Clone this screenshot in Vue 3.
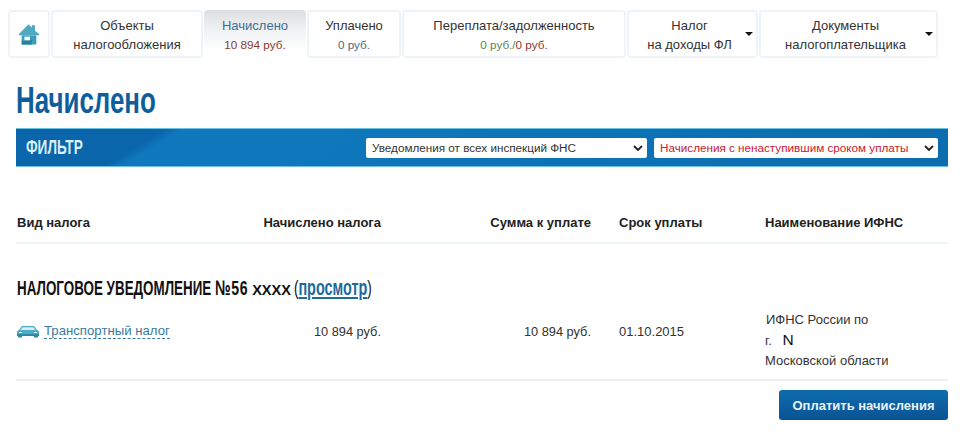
<script setup>
const tabs = [
  { key: 'objects', w: 152, lines: ['Объекты', 'налогообложения'] },
  { key: 'accrued', w: 102, lines: ['Начислено'], active: true },
  { key: 'paid', w: 94, lines: ['Уплачено'] },
  { key: 'over', w: 224, lines: ['Переплата/задолженность'] },
  { key: 'ndfl', w: 131, lines: ['Налог', 'на доходы ФЛ'], menu: true },
  { key: 'docs', w: 179, lines: ['Документы', 'налогоплательщика'], menu: true },
]
</script>

<template>
  <div class="page">
    <nav class="tabs">
      <a class="tab home">
        <svg width="22" height="23" viewBox="0 0 24 24">
          <path d="M1 12.500 11.500 2 15 5.500V3h3.500v6L23 12.500v1.500H1z" fill="#4fa9c2" />
          <path d="M4 14h16v10H4z" fill="#3b9db8" />
          <path d="M7 15.500h6v4H7z" fill="#fff" />
          <path d="M4 20h9v-1h2v5H4z" fill="#2a7f9b" />
        </svg>
      </a>
      <a v-for="t in tabs" :key="t.key" class="tab" :class="{ active: t.active, menu: t.menu }" :style="{ width: t.w + 'px' }">
        <span v-for="l in t.lines" :key="l" class="line">{{ l }}</span>
        <span v-if="t.key === 'accrued'" class="line sum red">10 894 руб.</span>
        <span v-if="t.key === 'paid'" class="line sum blue">0 руб.</span>
        <span v-if="t.key === 'over'" class="line sum"><span class="green">0 руб./</span><span class="red">0 руб.</span></span>
        <i v-if="t.menu" class="caret"></i>
      </a>
    </nav>

    <div class="title-wrap"><h1 class="title">Начислено</h1></div>

    <div class="filter">
      <div class="filter-label-wrap"><span class="filter-label">ФИЛЬТР</span></div>
      <div class="select first">
        <span>Уведомления от всех инспекций ФНС</span>
        <svg width="10" height="6" viewBox="0 0 10 6"><path d="M1 1l4 4 4-4" fill="none" stroke="#222" stroke-width="1.800" /></svg>
      </div>
      <div class="select second">
        <span>Начисления с ненаступившим сроком уплаты</span>
        <svg width="10" height="6" viewBox="0 0 10 6"><path d="M1 1l4 4 4-4" fill="none" stroke="#222" stroke-width="1.800" /></svg>
      </div>
    </div>

    <div class="grid head">
      <div class="first-col">Вид налога</div>
      <div class="right">Начислено налога</div>
      <div class="right">Сумма к уплате</div>
      <div class="date">Срок уплаты</div>
      <div>Наименование ИФНС</div>
    </div>

    <div class="notice-wrap">
      <h2 class="notice">НАЛОГОВОЕ УВЕДОМЛЕНИЕ <span class="no">№56</span><b class="xs">XXXX</b><span class="paren">(</span><a class="view">просмотр</a><span class="paren">)</span></h2>
    </div>

    <div class="grid row">
      <div class="tax cell">
        <svg width="22" height="13" viewBox="0 0 22 13">
          <path d="M5 1h12l3 4 2 1v5H0V6l2-1z" fill="#4cabc5" />
          <path d="M5.500 2.200h11L18.500 5h-15z" fill="#d6eef4" />
          <path d="M0 9h22v2H0z" fill="#2c8aa6" />
          <path d="M1 11h4v1.500H1zM17 11h4v1.500h-4z" fill="#2c8aa6" />
          <path d="M2 7h3v1H2zM17 7h3v1h-3z" fill="#e2f4f8" />
        </svg>
        <a class="tax-link">Транспортный налог</a>
      </div>
      <div class="right cell money">10 894 руб.</div>
      <div class="right cell money">10 894 руб.</div>
      <div class="date cell">01.10.2015</div>
      <div class="ifns">
        <div class="ifns-first">ИФНС России по</div>
        <div>г. <b class="n">N</b></div>
        <div>Московской области</div>
      </div>
    </div>

    <div class="actions">
      <button class="pay">Оплатить начисления</button>
    </div>
  </div>
</template>

<style>
html, body { margin: 0; background: #fff; }
</style>

<style scoped>
.page {
  width: 960px;
  height: 434px;
  overflow: hidden;
  box-sizing: border-box;
  padding: 10px 12px 0 16px;
  font-family: "Liberation Sans", Arial, sans-serif;
  font-size: 13px;
  color: #333;
}
.tabs {
  display: flex;
  gap: 1px;
  margin-left: -8px;
  height: 48px;
}
.tab {
  position: relative;
  box-sizing: border-box;
  display: flex;
  flex-direction: column;
  align-items: center;
  height: 48px;
  padding-top: 4px;
  border: 2px solid #eef3f7;
  border-radius: 4px;
  background: #fff;
  line-height: 19px;
  color: #333;
  text-align: center;
}
.tab.home {
  width: 42px;
  padding-top: 10px;
}
.tab.active {
  border: 0;
  padding-top: 6px;
  height: 49px;
  border-radius: 4px 4px 0 0;
  background: linear-gradient(#dcdfe1, #f4f5f6 50%, #fff 85%);
  color: #3d6d96;
  z-index: 1;
}
.tab.menu { padding-right: 6px; }
.line { display: block; white-space: nowrap; font-size: 13px; }
.line.sum { font-size: 11.700px; }
.red { color: #8c3a30; }
.blue { color: #4a6a84; }
.green { color: #5f7f4f; }
.caret {
  position: absolute;
  right: 3px;
  top: 20px;
  width: 0;
  height: 0;
  border: 4px solid transparent;
  border-top-color: #111;
  border-bottom: 0;
}
.title-wrap {
  height: 70px;
  padding-top: 16px;
  box-sizing: border-box;
}
.title {
  display: inline-block;
  margin: 0;
  font-size: 37px;
  line-height: 54px;
  font-weight: 700;
  color: #0f5e9c;
  transform: scaleX(.7);
  transform-origin: left center;
}
.filter {
  display: flex;
  align-items: center;
  box-sizing: border-box;
  height: 39px;
  padding-left: 10px;
  padding-right: 10px;
  border-top: 1px solid #6cc0e2;
  border-bottom: 1px solid #6cc0e2;
  background: linear-gradient(148.700deg, #0a65aa 0, #0a65aa 15%, #1079bd 17%, #0d73b7 60%, #0b6cae 100%);
}
.filter-label-wrap { width: 340px; }
.filter-label {
  display: inline-block;
  font-weight: 700;
  font-size: 20px;
  color: #d8f0f8;
  transform: scaleX(.68);
  transform-origin: left center;
}
.select {
  box-sizing: border-box;
  display: flex;
  align-items: center;
  justify-content: space-between;
  height: 20px;
  padding: 0 4px 0 6px;
  background: #fff;
  border-radius: 2px;
  font-size: 11.700px;
  white-space: nowrap;
}
.select.first { width: 281px; margin-right: 7px; color: #333; }
.select.second { width: 284px; color: #c8202f; }
.grid {
  display: grid;
  grid-template-columns: 215px 150px 210px 174px 183px;
}
.right { text-align: right; }
.date { padding-left: 28px; }
.first-col { padding-left: 1px; }
.head {
  margin-top: 48px;
  height: 27px;
  border-bottom: 2px solid #eef3f4;
  font-weight: 700;
  font-size: 13px;
  line-height: 16px;
  color: #222;
}
.notice-wrap { margin-top: 30px; height: 28px; padding-left: 1px; }
.notice {
  display: inline-block;
  margin: 0;
  white-space: nowrap;
  font-weight: 700;
  font-size: 20px;
  line-height: 28px;
  color: #111;
  transform: scaleX(.67);
  transform-origin: left center;
}
.no { letter-spacing: 1px; margin-right: 6px; font-size: 21px; }
.xs {
  display: inline-block;
  width: 58px;
  font-size: 14px;
  line-height: 14px;
  transform: scaleX(1.550);
  transform-origin: left center;
}
.paren { font-weight: 400; }
.xs + .paren { margin-left: 4px; }
.view {
  color: #1d6a9e;
  font-weight: 700;
  font-size: 21.500px;
  text-decoration: underline;
}
.row {
  margin-top: 8px;
  height: 69px;
  box-sizing: content-box;
  border-bottom: 2px solid #eef0f1;
  line-height: 17px;
  color: #333;
}
.cell { padding-top: 13px; }
.money { font-size: 12.800px; }
.tax { display: flex; align-items: center; gap: 5px; align-self: start; padding-left: 1px; }
.tax-link {
  color: #3a7a9e;
  border-bottom: 1px dashed #3a7a9e;
  line-height: 15px;
  font-size: 13.200px;
}
.ifns { line-height: 20px; font-size: 13px; }
.ifns-first { padding-left: 1px; }
.n { font-size: 15.500px; font-weight: 400; color: #111; margin-left: 7px; }
.actions {
  display: flex;
  justify-content: flex-end;
  margin-top: 9px;
}
.pay {
  width: 169px;
  height: 30px;
  border: 0;
  border-radius: 3px;
  background: linear-gradient(#0f6cae, #0a5393);
  color: #e6f3fa;
  font-family: "Liberation Sans", sans-serif;
  font-weight: 700;
  font-size: 13px;
}
</style>
